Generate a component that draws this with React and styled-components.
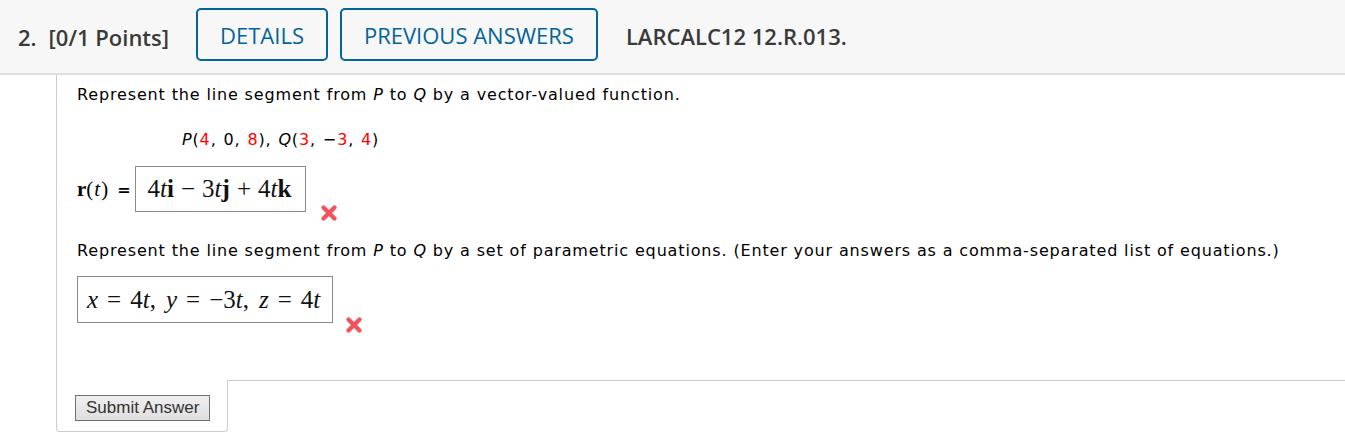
import React from 'react';
import styled, { createGlobalStyle } from 'styled-components';

const GlobalStyle = createGlobalStyle`
  body {
    margin: 0;
    background: #ffffff;
    font-family: "DejaVu Sans", Verdana, sans-serif;
  }
`;

const App = () => {
  return (
    <>
      <GlobalStyle />
      <Header>
        <Title>
          <Num>2.</Num>[0/1 Points]
        </Title>
        <HeadButton>DETAILS</HeadButton>
        <HeadButton>PREVIOUS ANSWERS</HeadButton>
        <Code>LARCALC12 12.R.013.</Code>
      </Header>
      <Card>
        <Content>
          <Text>
            Represent the line segment from <i>P</i> to <i>Q</i> by a vector-valued function.
          </Text>
          <Points>
            <i>P</i>(<Red>4</Red>, 0, <Red>8</Red>), <i>Q</i>(<Red>3</Red>, −<Red>3</Red>, <Red>4</Red>)
          </Points>
          <AnswerRow $top={16}>
            <Label>
              <SerifB>r</SerifB>
              <Serif>(<i>t</i>)</Serif> =
            </Label>
            <MathBox $w={171}>
              4<i>t</i><b>i</b><Op>−</Op>3<i>t</i><b>j</b><Op>+</Op>4<i>t</i><b>k</b>
            </MathBox>
            <Wrong $gap={14} $drop={38} />
          </AnswerRow>
          <Text $top={29}>
            Represent the line segment from <i>P</i> to <i>Q</i> by a set of parametric equations. (Enter your answers as a comma-separated list of equations.)
          </Text>
          <AnswerRow $top={15}>
            <MathBox $w={256} $h={47} $pad={9}>
              <i>x</i><Op $m={9}>=</Op>4<i>t</i>,<Sp /><i>y</i><Op $m={9}>=</Op>−3<i>t</i>,<Sp /><i>z</i><Op $m={9}>=</Op>4<i>t</i>
            </MathBox>
            <Wrong $gap={12} $drop={40} />
          </AnswerRow>
        </Content>
        <Footer>
          <SubmitTab>
            <SubmitButton>Submit Answer</SubmitButton>
          </SubmitTab>
          <Filler />
        </Footer>
      </Card>
    </>
  );
};

const Wrong = ({ $gap, $drop }) => (
  <XMark $gap={$gap} $drop={$drop} width="18" height="18" viewBox="0 0 18 18">
    <path d="M3.5 3.5 L14.5 14.5 M14.5 3.5 L3.5 14.5" stroke="#f2545e" strokeWidth="4.4" strokeLinecap="round" />
  </XMark>
);

// Styled Components
const Header = styled.div`
  display: flex;
  align-items: center;
  height: 73px;
  padding-left: 18px;
  background: #f7f7f7;
  border-bottom: 2px solid #dedede;
  font-family: "Open Sans", sans-serif;
  font-size: 22px;
`;

const Title = styled.div`
  font-weight: 600;
  color: #3a3a3a;
  margin-right: 27px;
`;

const Num = styled.span`
  margin-right: 12px;
`;

const HeadButton = styled.div`
  height: 49px;
  display: flex;
  align-items: center;
  padding: 0 22px;
  margin-right: 12px;
  margin-top: -4px;
  border: 2px solid #04639b;
  border-radius: 5px;
  color: #04639b;
`;

const Code = styled.div`
  font-weight: 600;
  color: #3a3a3a;
  margin-left: 16px;
  margin-top: -1px;
`;

const Card = styled.div`
  margin-left: 56px;
`;

const Content = styled.div`
  border-left: 1px solid #cccccc;
  padding: 10px 0 0 20px;
  height: 295px;
`;

const Text = styled.div`
  margin-top: ${p => p.$top || 0}px;
  font-size: 16px;
  line-height: 20px;
  letter-spacing: 0.85px;
  color: #000;
`;

const Points = styled(Text)`
  margin-top: 25px;
  padding-left: 105px;
  word-spacing: 1px;
`;

const Red = styled.span`
  color: #ff0000;
`;

const AnswerRow = styled.div`
  display: flex;
  align-items: flex-start;
  margin-top: ${p => p.$top}px;
`;

const Label = styled.div`
  height: 46px;
  display: flex;
  align-items: center;
  font-size: 16px;
  font-weight: bold;
  margin-right: 4px;
`;

const SerifB = styled.span`
  font-family: "Liberation Serif", serif;
  font-size: 21px;
  font-weight: bold;
`;

const Serif = styled.span`
  font-family: "Liberation Serif", serif;
  font-size: 21px;
  font-weight: normal;
  margin-right: 8px;
  letter-spacing: 1px;
`;

const MathBox = styled.div`
  box-sizing: border-box;
  width: ${p => p.$w}px;
  height: ${p => p.$h || 46}px;
  border: 1px solid #8a8a8a;
  display: flex;
  align-items: center;
  padding-left: ${p => p.$pad || 12}px;
  font-family: "Liberation Serif", serif;
  font-size: 25px;
  color: #111;
  white-space: pre;
`;

const Op = styled.span`
  margin: 0 ${p => p.$m || 7}px;
`;

const Sp = styled.span`
  display: inline-block;
  width: 10px;
`;

const XMark = styled.svg`
  margin-left: ${p => p.$gap}px;
  margin-top: ${p => p.$drop}px;
  margin-bottom: -20px;
  flex-shrink: 0;
`;

const Footer = styled.div`
  display: flex;
`;

const SubmitTab = styled.div`
  width: 172px;
  height: 52px;
  border: 1px solid #cccccc;
  border-top: none;
  border-radius: 0 0 4px 4px;
  padding: 15px 0 0 18px;
  box-sizing: border-box;
`;

const Filler = styled.div`
  flex: 1;
  border-top: 1px solid #cccccc;
`;

const SubmitButton = styled.button`
  font-family: "Liberation Sans", Arial, sans-serif;
  font-size: 17px;
  color: #333;
  height: 26px;
  padding: 0 10px;
  background: linear-gradient(#f0f0f0, #dedede);
  border: 1px solid #707070;
  border-radius: 0;
`;

export default App;
